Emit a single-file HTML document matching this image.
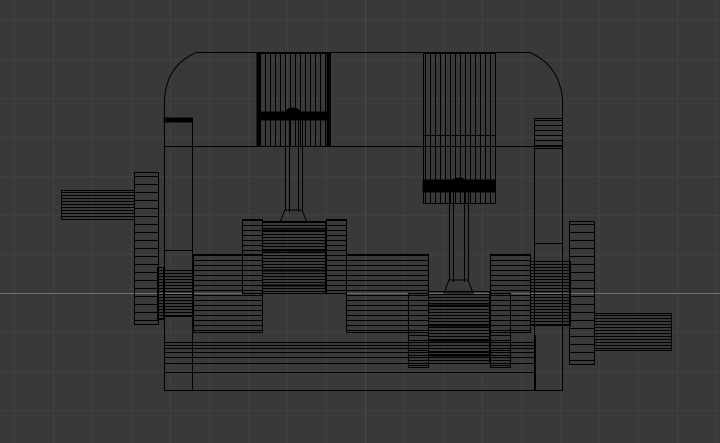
<!DOCTYPE html>
<html><head><style>
html,body{margin:0;padding:0;background:#393939;}
svg{display:block;}
</style></head><body>
<svg width="720" height="443" viewBox="0 0 720 443" xmlns="http://www.w3.org/2000/svg">
<defs>
<pattern id="g" width="39" height="39" patternUnits="userSpaceOnUse" x="14" y="20">
<path d="M0 0H39M0 0V39" stroke="#474747" stroke-width="1" fill="none"/>
</pattern>
<pattern id="h" width="6" height="5" patternUnits="userSpaceOnUse">
<path d="M0 0.5H6" stroke="#000" stroke-width="1"/>
</pattern>
<pattern id="hd" width="6" height="3" patternUnits="userSpaceOnUse">
<path d="M0 0.5H6" stroke="#000" stroke-width="1"/>
</pattern>
<pattern id="hs" width="6" height="8" patternUnits="userSpaceOnUse">
<path d="M0 0.5H6" stroke="#000" stroke-width="1"/>
</pattern>
<pattern id="v" width="5" height="6" patternUnits="userSpaceOnUse">
<path d="M0.5 0V6" stroke="#000" stroke-width="1"/>
</pattern>
</defs>
<rect width="720" height="443" fill="#393939"/>
<rect width="720" height="443" fill="url(#g)"/>
<line x1="0" y1="293.5" x2="720" y2="293.5" stroke="#4e8a3c"/>
<line x1="365.5" y1="0" x2="365.5" y2="443" stroke="#4040a8"/>
<g fill="none" stroke="#000" stroke-width="1">
<path d="M164.5 390.5V100 Q166 66 196 52.5H530 Q560 66 562.5 100V390.5H164.5Z"/>
<line x1="164" y1="146.5" x2="562" y2="146.5"/>
<rect x="164.5" y="118.5" width="28" height="272"/>
<rect x="164" y="118" width="28" height="4" fill="#000"/>
<line x1="164" y1="250.5" x2="192" y2="250.5"/>
<rect x="534.5" y="118.5" width="28" height="272"/>
<rect x="534.5" y="118.5" width="28" height="30" fill="url(#h)"/>
<line x1="534" y1="243.5" x2="562" y2="243.5"/>
<path d="M164 342.5H535M164 345.5H535M164 348.5H535M164 352.5H535M164 357.5H535M164 363.5H535M164 372.5H535"/>
<line x1="535.5" y1="335" x2="535.5" y2="390"/>
<rect x="61.5" y="190.5" width="73" height="29" fill="url(#hd)"/>
<rect x="134.5" y="172.5" width="24" height="152" fill="url(#hs)"/>
<rect x="157.5" y="267.5" width="6" height="52" fill="url(#hd)"/>
<rect x="163.5" y="270.5" width="30" height="46" fill="url(#hd)"/>
<rect x="193.5" y="254.5" width="69" height="78" fill="url(#h)"/>
<rect x="242.5" y="219.5" width="20" height="74" fill="url(#h)"/>
<rect x="262.5" y="221.5" width="63" height="72" fill="url(#hd)"/>
<path d="M262 230.5H326M262 250.5H326M262 270.5H326M262 285.5H326" stroke-width="2"/>
<rect x="326.5" y="219.5" width="20" height="74" fill="url(#h)"/>
<rect x="346.5" y="254.5" width="82" height="78" fill="url(#h)"/>
<rect x="408.5" y="293.5" width="20" height="74" fill="url(#h)"/>
<rect x="428.5" y="291.5" width="61" height="72" fill="url(#hd)"/>
<path d="M428 305.5H490M428 325.5H490M428 340.5H490M428 355.5H490" stroke-width="2"/>
<rect x="490.5" y="293.5" width="20" height="74" fill="url(#h)"/>
<rect x="490.5" y="254.5" width="40" height="78" fill="url(#h)"/>
<rect x="530.5" y="261.5" width="40" height="64" fill="url(#hd)"/>
<rect x="569.5" y="221.5" width="25" height="143" fill="url(#hs)"/>
<rect x="594.5" y="313.5" width="77" height="37" fill="url(#hd)"/>
<rect x="257.5" y="53.5" width="73" height="93" fill="url(#v)"/>
<rect x="257" y="112" width="73" height="8" fill="#000"/>
<rect x="257" y="53" width="3" height="93" fill="#000"/>
<rect x="327" y="53" width="3" height="93" fill="#000"/>
<path d="M285.5 120V210M302.5 120V210M289.5 120V212M298.5 120V212"/>
<path d="M285 210L280 222H307L302 210Z"/>
<ellipse cx="293" cy="114" rx="8" ry="6" fill="#000"/>
<rect x="423.5" y="53.5" width="72" height="150" fill="url(#v)"/>
<line x1="423" y1="135.5" x2="495" y2="135.5"/>
<rect x="423" y="180" width="72" height="12" fill="#000"/>
<path d="M449.5 192V280M468.5 192V280M453.5 192V282M464.5 192V282"/>
<path d="M449 280L444 293H473L468 280Z"/>
<ellipse cx="459" cy="183" rx="8" ry="5" fill="#000"/>
</g>
</svg>
</body></html>
